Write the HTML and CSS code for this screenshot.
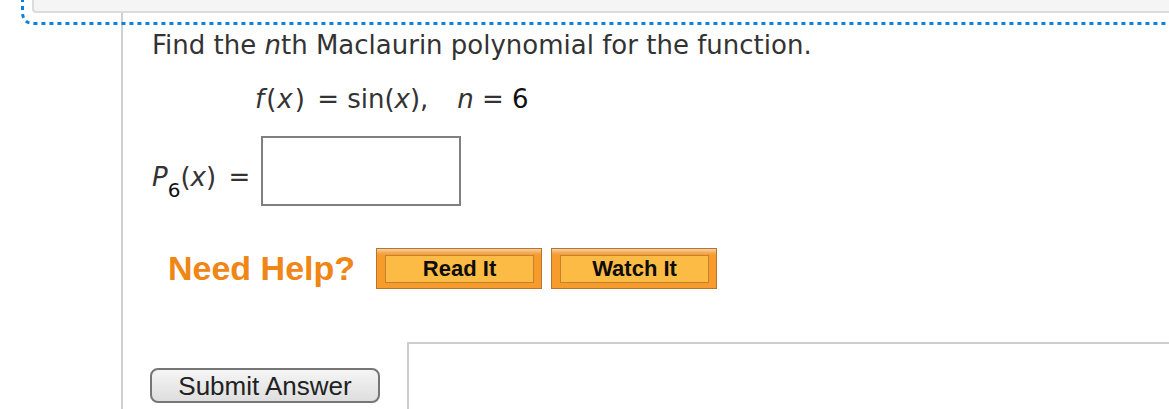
FILE: index.html
```html
<!DOCTYPE html>
<html>
<head>
<meta charset="utf-8">
<link rel="stylesheet" href="styles.css">
</head>
<body>
<div class="frame">
  <div class="topbar"></div>
  <svg class="focus" width="1169" height="30" viewBox="0 0 1169 30"><path d="M22.5 -10 V12 Q22.5 23.5 34 23.5 H1180"/></svg>
</div>
<main class="question">
  <p class="prompt">Find the <i>n</i>th Maclaurin polynomial for the function.</p>
  <p class="equation"><i class="fn">f</i>(<i class="arg">x</i>) <span class="rel">=</span> sin(<i>x</i>),&nbsp;&nbsp; <i class="nvar">n</i> = <span class="num">6</span></p>
  <div class="answer-row">
    <label class="answer-label"><i>P</i><sub>6</sub>(<i>x</i>) <span class="eq">=</span></label>
    <input class="answer-box" type="text">
  </div>
  <div class="help-row">
    <span class="need-help">Need Help?</span>
    <button class="help-btn"><span>Read It</span></button>
    <button class="help-btn"><span>Watch It</span></button>
  </div>
  <div class="submit-row">
    <button class="submit">Submit Answer</button>
    <div class="result-box"></div>
  </div>
</main>
</body>
</html>
```
FILE: styles.css
```css
html, body {
  margin: 0;
  height: 409px;
  overflow: hidden;
  background: #fff;
}
body {
  font-family: "DejaVu Sans", Verdana, sans-serif;
  color: #333;
}
.frame {
  position: relative;
  height: 13px;
}
.topbar {
  height: 11px;
  margin-left: 32px;
  background: #f5f5f5;
  border-left: 2px solid #dcdcdc;
  border-bottom: 2px solid #dcdcdc;
  border-bottom-left-radius: 4px;
}
.focus {
  position: absolute;
  left: 0;
  top: 0;
  overflow: visible;
  z-index: 2;
}
.focus path {
  fill: none;
  stroke: #0b80e0;
  stroke-width: 3;
  stroke-dasharray: 4 4;
}
.question {
  margin-left: 121px;
  border-left: 2px solid #cfcfcf;
  padding: 17px 0 0 29px;
}
.prompt {
  margin: 0;
  font-size: 26px;
  line-height: 30px;
}
.equation {
  margin: 24px 0 0 103px;
  font-size: 26px;
  line-height: 30px;
}
.equation .fn {
  margin-right: 2px;
}
.equation .arg {
  margin-left: 1px;
  margin-right: 2px;
}
.equation .rel {
  margin-left: 4px;
}
.equation .nvar {
  margin-left: 4px;
}
.num {
  color: #111;
}
.answer-row {
  display: flex;
  align-items: flex-start;
  margin-top: 22px;
}
.answer-label {
  font-size: 26px;
  line-height: 30px;
  margin-top: 26px;
  margin-right: 11px;
}
.answer-label sub {
  font-size: 20px;
  line-height: 0;
  vertical-align: -11px;
  color: #111;
}
.eq {
  margin-left: 4px;
}
.answer-box {
  width: 200px;
  height: 70px;
  box-sizing: border-box;
  border: 2px solid #808080;
  margin: 0;
  padding: 0;
  background: #fff;
}
.help-row {
  display: flex;
  align-items: center;
  margin-top: 42px;
  padding-left: 16px;
}
.need-help {
  font: bold 34px/41px "Liberation Sans", Arial, sans-serif;
  color: #ef8616;
  margin-right: 21px;
}
.help-btn {
  display: block;
  width: 166px;
  height: 41px;
  box-sizing: border-box;
  margin: 0;
  padding: 6px 7px 5px 8px;
  border: 1px solid #b8732c;
  background: linear-gradient(#f3d3b0 0, #f6b060 3px, #f79b2d 6px, #f79b2d 100%);
}
.help-btn span {
  display: flex;
  align-items: center;
  justify-content: center;
  height: 100%;
  box-sizing: border-box;
  border: 1px solid #c4822f;
  background: #fcbb44;
  font: bold 22px "Liberation Sans", Arial, sans-serif;
  color: #0d0d0d;
}
.help-btn + .help-btn {
  margin-left: 9px;
}
.submit-row {
  display: flex;
  align-items: flex-start;
  margin: 53px 0 0 -2px;
}
.submit {
  margin: 26px 0 0;
  width: 230px;
  height: 35px;
  box-sizing: border-box;
  border: 2px solid #767676;
  border-radius: 8px;
  background: linear-gradient(#f5f5f5, #dedede);
  font: 26px/1 "Liberation Sans", Arial, sans-serif;
  color: #222;
  padding: 0;
}
.result-box {
  flex: 1;
  margin: 0 -50px 0 27px;
  height: 67px;
  border-top: 2px solid #cdcdcd;
  border-left: 2px solid #cdcdcd;
}
```
